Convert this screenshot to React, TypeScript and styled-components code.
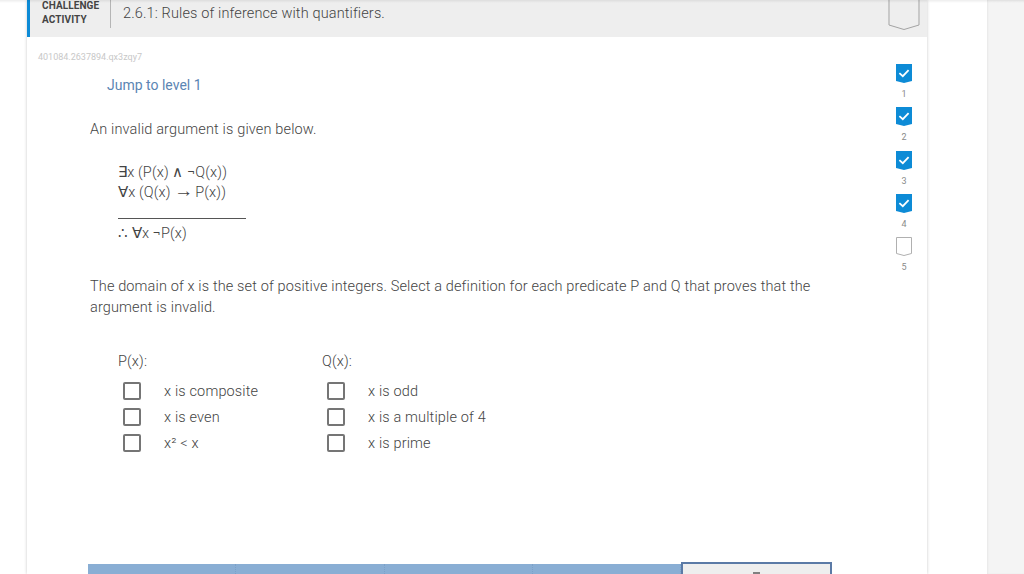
import styled, { createGlobalStyle } from "styled-components";

const GlobalStyle = createGlobalStyle`
  html, body {
    margin: 0;
    padding: 0;
    background: #fff;
  }
  body {
    font-family: Roboto, "Liberation Sans", sans-serif;
    color: #555;
  }
`;

const levels = [1, 2, 3, 4, 5];

const pOptions = ["x is composite", "x is even", "x² < x"];
const qOptions = ["x is odd", "x is a multiple of 4", "x is prime"];

function Bookmark({ done, big }: { done?: boolean; big?: boolean }) {
  if (big) {
    return (
      <svg width="32" height="30" viewBox="0 0 32 30">
        <path d="M1 -2V25L16 29.5L31 25V-2" fill="none" stroke="#a3a3a3" strokeWidth="1" />
      </svg>
    );
  }
  if (!done) {
    return (
      <svg width="18" height="19" viewBox="0 0 18 19">
        <path d="M1.5 .5H16.5V16.5L9 18.5L1.5 16.5Z" fill="#fff" stroke="#b0b0b0" strokeWidth="1" />
      </svg>
    );
  }
  return (
    <svg width="18" height="19" viewBox="0 0 18 19">
      <path d="M1 0H17V17L9 19L1 17Z" fill="#0d8bd6" />
      <path d="M4.4 9.2L7.8 12.2L13.6 6.2" fill="none" stroke="#fff" strokeWidth="1.8" />
    </svg>
  );
}

function OptionColumn({ title, options }: { title: string; options: string[] }) {
  return (
    <OptionGroup>
      <OptionTitle>{title}</OptionTitle>
      {options.map((option) => (
        <OptionRow key={option}>
          <Box />
          <span>{option}</span>
        </OptionRow>
      ))}
    </OptionGroup>
  );
}

export default function App() {
  return (
    <>
      <GlobalStyle />
      <Page>
        <Card>
          <Header>
            <Caption>
              CHALLENGE
              <br />
              ACTIVITY
            </Caption>
            <Title>2.6.1: Rules of inference with quantifiers.</Title>
            <HeaderMark>
              <Bookmark big />
            </HeaderMark>
          </Header>
          <Body>
            <Main>
              <Seed>401084.2637894.qx3zqy7</Seed>
              <JumpLink>Jump to level 1</JumpLink>
              <Paragraph>An invalid argument is given below.</Paragraph>
              <Formula>
                <div>
                  ∃x (P(x) <Wedge>∧</Wedge> ¬Q(x))
                </div>
                <div>
                  ∀x (Q(x) <Arrow>→</Arrow> P(x))
                </div>
                <FormulaRule />
                <div>∴ ∀x ¬P(x)</div>
              </Formula>
              <Question>
                The domain of x is the set of positive integers. Select a definition for each
                predicate P and Q that proves that the argument is invalid.
              </Question>
              <Options>
                <OptionColumn title="P(x):" options={pOptions} />
                <OptionColumn title="Q(x):" options={qOptions} />
              </Options>
              <LevelBar>
                <LevelSegment />
                <LevelSegment />
                <LevelSegment />
                <LevelSegment />
                <ActiveLevel>
                  <Notch />
                </ActiveLevel>
              </LevelBar>
            </Main>
            <Stepper>
              {levels.map((level) => (
                <Step key={level}>
                  <Bookmark done={level < 5} />
                  <StepLabel>{level}</StepLabel>
                </Step>
              ))}
            </Stepper>
          </Body>
        </Card>
        <Gutter />
        <SideRail />
      </Page>
    </>
  );
}

const Page = styled.div`
  display: flex;
  height: 574px;
  overflow: hidden;
  padding-left: 27px;
  box-sizing: border-box;
  position: relative;

  &::before {
    content: "";
    position: absolute;
    inset: 0 0 auto 0;
    height: 3px;
    background: linear-gradient(rgba(0, 0, 0, 0.07), rgba(0, 0, 0, 0));
    z-index: 2;
  }
`;

const Card = styled.div`
  width: 900px;
  flex: none;
  display: flex;
  flex-direction: column;
  background: #fff;
  box-shadow: 0 0 3px rgba(0, 0, 0, 0.22);
`;

const Header = styled.div`
  height: 37px;
  flex: none;
  display: flex;
  align-items: flex-start;
  background: #eeeeee;
  border-left: 3px solid #0d8bd6;
  padding-left: 12px;
  position: relative;
`;

const Caption = styled.div`
  width: 68px;
  height: 29px;
  margin-top: -1px;
  border-right: 1px solid #b5b5b5;
  font-size: 10px;
  font-weight: 700;
  line-height: 14px;
  color: #444;
  letter-spacing: 0.1px;
`;

const Title = styled.div`
  margin-left: 12px;
  margin-top: 5px;
  font-size: 14.5px;
  font-weight: 300;
  letter-spacing: 0.13px;
  line-height: 18px;
  color: #444;
`;

const HeaderMark = styled.div`
  position: absolute;
  right: 7px;
  top: 0;
  height: 30px;
`;

const Body = styled.div`
  flex: 1;
  display: flex;
  min-height: 0;
`;

const Main = styled.div`
  flex: 1;
  min-width: 0;
  padding: 15px 0 0 11px;
`;

const Seed = styled.div`
  font-size: 9px;
  line-height: 11px;
  color: #c8c8c8;
`;

const JumpLink = styled.div`
  margin: 13px 0 0 69px;
  font-size: 14px;
  line-height: 18px;
  color: #5b85b3;
`;

const Paragraph = styled.p`
  margin: 25px 0 0 52px;
  font-size: 14.5px;
  font-weight: 300;
  letter-spacing: 0.15px;
  line-height: 21px;
  color: #444;
`;

const Formula = styled.div`
  margin: 22px 0 0 80px;
  width: 128px;
  font-size: 14.5px;
  font-weight: 300;
  letter-spacing: 0.15px;
  line-height: 20px;
  color: #444;
`;

const Wedge = styled.span`
  font-family: "Liberation Sans", sans-serif;
`;

const Arrow = styled.span`
  font-family: "Liberation Sans", sans-serif;
  font-size: 19px;
  line-height: 0;
  margin-right: -2px;
`;

const FormulaRule = styled.div`
  height: 1px;
  background: #555;
  margin: 15px 0 5px;
`;

const Question = styled.p`
  width: 740px;
  margin: 32px 0 0 52px;
  font-size: 14.5px;
  font-weight: 300;
  letter-spacing: 0.13px;
  line-height: 21px;
  color: #444;
`;

const Options = styled.div`
  display: flex;
  margin: 35px 0 0 80px;
`;

const OptionGroup = styled.div`
  width: 204px;
  font-size: 14.5px;
  font-weight: 300;
  letter-spacing: 0.15px;
  color: #444;
`;

const OptionTitle = styled.div`
  line-height: 18px;
  margin-bottom: 7px;
`;

const OptionRow = styled.div`
  display: flex;
  align-items: center;
  height: 26px;
  padding-left: 5px;
  gap: 23px;
`;

const Box = styled.span`
  width: 18px;
  height: 18px;
  box-sizing: border-box;
  border: 2px solid #757575;
  border-radius: 2px;
  background: #fff;
  flex: none;
`;

const LevelBar = styled.div`
  display: flex;
  align-items: flex-end;
  margin: 106px 0 0 50px;
  height: 12px;
`;

const LevelSegment = styled.div`
  width: 148.25px;
  height: 10px;
  background: #89aed4;
  border-right: 1px dotted #7ba1c9;
  box-sizing: border-box;
`;

const ActiveLevel = styled.div`
  width: 151px;
  height: 12px;
  box-sizing: border-box;
  border: 2px solid #5b7aa6;
  border-bottom: 0;
  background: #eeeeee;
  display: flex;
  justify-content: center;
  align-items: flex-end;
`;

const Notch = styled.span`
  width: 7px;
  height: 2px;
  background: #808080;
`;

const Stepper = styled.div`
  width: 46px;
  flex: none;
  display: flex;
  flex-direction: column;
  align-items: center;
  padding-top: 27px;
`;

const Step = styled.div`
  display: flex;
  flex-direction: column;
  align-items: center;
  height: 43.3px;
  color: #8a8a8a;

  svg {
    display: block;
  }
`;

const StepLabel = styled.span`
  margin-top: 6px;
  font-size: 9px;
  line-height: 10px;
`;

const Gutter = styled.div`
  width: 60px;
  flex: none;
`;

const SideRail = styled.div`
  flex: 1;
  background: #f4f4f4;
  box-shadow: inset 1px 0 2px rgba(0, 0, 0, 0.05);
`;
